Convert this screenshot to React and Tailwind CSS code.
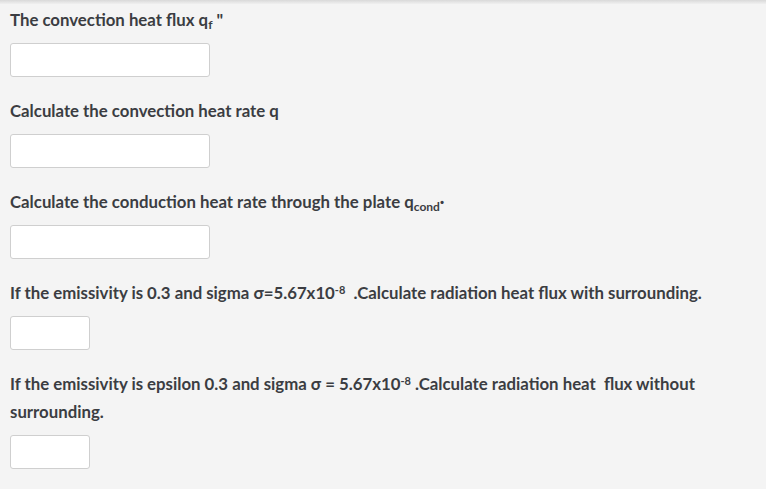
export default function App() {
  const font = { fontFamily: 'Lato, "Open Sans", sans-serif' };
  return (
    <div className="w-[766px] h-[489px] bg-[#f4f4f4] overflow-hidden relative" style={font}>
      <div className="h-[4px] bg-gradient-to-b from-[#d9d9d9] to-[#f0f0f0]" />
      <div className="pl-[10px] pt-[7px] text-[#3b3d42] font-bold text-[16.8px]">
        <div className="h-[18px] leading-[18px]">
          The convection heat flux q<sub className="text-[12px] font-bold">f</sub> "
        </div>
        <div className="mt-[14px] w-[200px] h-[34px] bg-white border border-[#cfcfcf] rounded-[3px]" />

        <div className="mt-[25px] h-[18px] leading-[18px]">Calculate the convection heat rate q</div>
        <div className="mt-[14px] w-[200px] h-[34px] bg-white border border-[#cfcfcf] rounded-[3px]" />

        <div className="mt-[25px] h-[18px] leading-[18px]">
          Calculate the conduction heat rate through the plate q<sub className="text-[12px] font-bold">cond</sub>·
        </div>
        <div className="mt-[14px] w-[200px] h-[34px] bg-white border border-[#cfcfcf] rounded-[3px]" />

        <div className="mt-[25px] h-[18px] leading-[18px]">
          If the emissivity is 0.3 and sigma σ=5.67x10<sup className="text-[11px]">-8</sup>&nbsp; .Calculate radiation heat flux with surrounding.
        </div>
        <div className="mt-[14px] w-[80px] h-[34px] bg-white border border-[#cfcfcf] rounded-[3px]" />

        <div className="mt-[20px] leading-[28px] w-[730px]">
          If the emissivity is epsilon 0.3 and sigma σ = 5.67x10<sup className="text-[11px]">-8</sup> .Calculate radiation heat&nbsp; flux without surrounding.
        </div>
        <div className="mt-[9px] w-[80px] h-[34px] bg-white border border-[#cfcfcf] rounded-[3px]" />
      </div>
    </div>
  );
}
